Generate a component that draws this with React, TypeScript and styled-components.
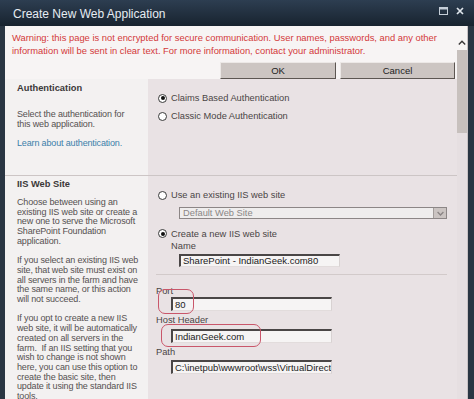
import React from 'react';
import styled, { createGlobalStyle } from 'styled-components';

const GlobalStyle = createGlobalStyle`
  * {
    box-sizing: border-box;
    margin: 0;
    padding: 0;
  }

  html,
  body {
    width: 474px;
    height: 399px;
    overflow: hidden;
    background: #25313e;
    font-family: "Liberation Sans", Arial, sans-serif;
  }
`;

const Window = styled.div`
  width: 474px;
  height: 399px;
  display: flex;
  flex-direction: column;
  overflow: hidden;
  background: #27333f;
`;

const TitleBar = styled.div`
  flex: none;
  height: 26px;
  display: flex;
  align-items: center;
  padding: 0 10px 0 13px;
  background: linear-gradient(#2d3e51, #18232f);
  color: #e6ecf2;
  font-size: 12px;
`;

const Title = styled.span`
  flex: 1;
  padding-top: 1px;
`;

const WindowControls = styled.div`
  display: flex;
  align-items: center;
  gap: 8px;
  margin-top: -4px;
`;

const Body = styled.div`
  flex: 1;
  min-height: 0;
  display: flex;
  padding: 0 6px 0 5px;
  background: #2a3643;
`;

const Main = styled.div`
  flex: 1;
  display: flex;
  flex-direction: column;
  background: #f7f4f4;
  overflow: hidden;
`;

const Warning = styled.p`
  padding: 4.5px 0 0 7px;
  color: #d3393a;
  font-size: 9.4px;
  line-height: 13px;
  white-space: pre-line;
`;

const ButtonRow = styled.div`
  display: flex;
  justify-content: flex-end;
  gap: 4px;
  padding: 5.5px 2px 0 0;
`;

const Button = styled.button<{ $width: number }>`
  width: ${(p) => p.$width}px;
  height: 17px;
  background: #ccc5c2;
  border: 1px solid;
  border-color: #ece8e6 #5c5652 #5c5652 #ece8e6;
  color: #222;
  font-family: inherit;
  font-size: 9.5px;
`;

const Section = styled.div<{ $height?: number; $divided?: boolean }>`
  display: grid;
  grid-template-columns: 143px 1fr;
  flex: ${(p) => (p.$height ? `0 0 ${p.$height}px` : '1')};
  min-height: 0;
  border-top: ${(p) => (p.$divided ? '1px solid #ccc5c5' : 'none')};
`;

const Describe = styled.div<{ $top: number }>`
  background: #f3f1f1;
  padding: ${(p) => p.$top}px 4px 0 12px;
  color: #555050;
  font-size: 9px;
  line-height: 9.7px;
  letter-spacing: -0.15px;
  overflow: hidden;
`;

const Heading = styled.h3<{ $gap: number }>`
  font-size: 9.3px;
  line-height: 12px;
  font-weight: bold;
  letter-spacing: 0;
  color: #3b3838;
  margin-bottom: ${(p) => p.$gap}px;
`;

const Para = styled.p`
  white-space: pre;
  margin-bottom: 9.7px;
`;

const Link = styled.a`
  color: #3b80aa;
  text-decoration: none;
`;

const Controls = styled.div`
  background: #e9e2e4;
  padding: 13px 10px 0 10px;
  color: #4a4545;
  font-size: 9.3px;
`;

const RadioRow = styled.div<{ $top?: number }>`
  display: flex;
  align-items: center;
  gap: 4px;
  height: 12px;
  margin-top: ${(p) => p.$top ?? 0}px;
`;

const RadioDot = styled.span<{ $checked?: boolean }>`
  position: relative;
  width: 9px;
  height: 9px;
  border-radius: 50%;
  border: 1px solid #3a3a3a;
  background: #fff;

  &::after {
    content: '';
    display: ${(p) => (p.$checked ? 'block' : 'none')};
    position: absolute;
    inset: 1.5px;
    border-radius: 50%;
    background: #111;
  }
`;

const Select = styled.div`
  display: flex;
  align-items: center;
  width: 268px;
  height: 12px;
  margin: 6px 0 0 21px;
  padding-left: 3px;
  border: 1px solid #8c8686;
  background: #efeded;
  color: #8a8686;
  font-size: 9.3px;
`;

const SelectButton = styled.span`
  margin-left: auto;
  width: 13px;
  height: 100%;
  display: flex;
  align-items: center;
  justify-content: center;
  background: #cbc4c2;
  border-left: 1px solid #a39d9b;
`;

const SubLabel = styled.div`
  margin: 1px 0 0 13px;
  line-height: 11px;
`;

const TextBox = styled.div<{ $indent: number; $height: number; $top: number }>`
  display: flex;
  align-items: center;
  width: 161px;
  height: ${(p) => p.$height}px;
  margin: ${(p) => p.$top}px 0 0 ${(p) => p.$indent}px;
  padding-left: 2px;
  border-top: 2px solid #4a4646;
  border-left: 2px solid #4a4646;
  border-right: 1px solid #d8d2d2;
  border-bottom: 1px solid #e2dcdc;
  background: #f6f4f4;
  color: #222;
  font-size: 9.5px;
  white-space: nowrap;
  overflow: hidden;
`;

const Rule = styled.hr`
  border: none;
  border-top: 1px solid #d2caca;
  margin: 7px 0 0 -2px;
  width: 291px;
`;

const Fields = styled.div`
  margin-left: -2px;
`;

const Field = styled.div<{ $top: number }>`
  position: relative;
  margin-top: ${(p) => p.$top}px;
`;

const FieldLabel = styled.div`
  line-height: 11px;
`;

const Ring = styled.span<{ $x: number; $y: number; $w: number; $h: number }>`
  position: absolute;
  left: ${(p) => p.$x}px;
  top: ${(p) => p.$y}px;
  width: ${(p) => p.$w}px;
  height: ${(p) => p.$h}px;
  border: 1.5px solid #c9566a;
  border-radius: 7px;
`;

const Scrollbar = styled.div`
  flex: 0 0 11px;
  display: flex;
  flex-direction: column;
  background: #e6dfe1;
  border-right: 1px solid #c9c2c4;
`;

const ScrollTop = styled.div`
  flex: 0 0 24px;
  display: flex;
  align-items: flex-end;
  justify-content: center;
  padding-bottom: 5px;
  background: #f7f4f4;
`;

const Thumb = styled.div`
  flex: 0 0 83px;
  background: #c7c0bd;
`;

const MaximizeIcon = () => (
  <svg width="9" height="8" viewBox="0 0 9 8">
    <rect x="0.5" y="0.5" width="8" height="7" fill="none" stroke="#c5ced8" />
    <rect x="0.5" y="0.5" width="8" height="2" fill="#c5ced8" />
  </svg>
);

const CloseIcon = () => (
  <svg width="8" height="8" viewBox="0 0 8 8">
    <path d="M1 1 L7 7 M7 1 L1 7" stroke="#dfe5eb" strokeWidth="1.7" />
  </svg>
);

const ChevronUp = () => (
  <svg width="8" height="5" viewBox="0 0 8 5">
    <polyline points="0.8,4.4 4,1.2 7.2,4.4" fill="none" stroke="#3a3838" strokeWidth="1.4" />
  </svg>
);

const ChevronDown = () => (
  <svg width="7" height="5" viewBox="0 0 7 5">
    <polyline points="0.6,1 3.5,4 6.4,1" fill="none" stroke="#8a8484" strokeWidth="1.3" />
  </svg>
);

const App: React.FC = () => (
  <>
    <GlobalStyle />
    <Window>
      <TitleBar>
        <Title>Create New Web Application</Title>
        <WindowControls>
          <MaximizeIcon />
          <CloseIcon />
        </WindowControls>
      </TitleBar>
      <Body>
        <Main>
          <Warning>
            {'Warning: this page is not encrypted for secure communication. User names, passwords, and any other\ninformation will be sent in clear text. For more information, contact your administrator.'}
          </Warning>
          <ButtonRow>
            <Button $width={116}>OK</Button>
            <Button $width={115}>Cancel</Button>
          </ButtonRow>

          <Section $height={96}>
            <Describe $top={3}>
              <Heading $gap={16}>Authentication</Heading>
              <Para>{'Select the authentication for\nthis web application.'}</Para>
              <Link>Learn about authentication.</Link>
            </Describe>
            <Controls>
              <RadioRow>
                <RadioDot $checked />
                Claims Based Authentication
              </RadioRow>
              <RadioRow $top={6}>
                <RadioDot />
                Classic Mode Authentication
              </RadioRow>
            </Controls>
          </Section>

          <Section $divided>
            <Describe $top={2}>
              <Heading $gap={8}>IIS Web Site</Heading>
              <Para>
                {'Choose between using an\nexisting IIS web site or create a\nnew one to serve the Microsoft\nSharePoint Foundation\napplication.'}
              </Para>
              <Para>
                {'If you select an existing IIS web\nsite, that web site must exist on\nall servers in the farm and have\nthe same name, or this action\nwill not succeed.'}
              </Para>
              <Para>
                {'If you opt to create a new IIS\nweb site, it will be automatically\ncreated on all servers in the\nfarm.  If an IIS setting that you\nwish to change is not shown\nhere, you can use this option to\ncreate the basic site, then\nupdate it using the standard IIS\ntools.'}
              </Para>
            </Describe>
            <Controls>
              <RadioRow>
                <RadioDot />
                Use an existing IIS web site
              </RadioRow>
              <Select>
                Default Web Site
                <SelectButton>
                  <ChevronDown />
                </SelectButton>
              </Select>
              <RadioRow $top={8.7}>
                <RadioDot $checked />
                Create a new IIS web site
              </RadioRow>
              <SubLabel>Name</SubLabel>
              <TextBox $indent={21} $height={13} $top={2}>
                SharePoint - IndianGeek.com80
              </TextBox>
              <Rule />
              <Fields>
                <Field $top={11}>
                  <FieldLabel>Port</FieldLabel>
                  <TextBox $indent={15} $height={14} $top={0}>
                    80
                  </TextBox>
                  <Ring $x={2.3} $y={3.6} $w={36} $h={24.4} />
                </Field>
                <Field $top={4.5}>
                  <FieldLabel>Host Header</FieldLabel>
                  <TextBox $indent={15} $height={14} $top={2.5}>
                    IndianGeek.com
                  </TextBox>
                  <Ring $x={4.7} $y={8.5} $w={100} $h={23.3} />
                </Field>
                <Field $top={4}>
                  <FieldLabel>Path</FieldLabel>
                  <TextBox $indent={15} $height={14} $top={2.5}>
                    C:\inetpub\wwwroot\wss\VirtualDirectories\80
                  </TextBox>
                </Field>
              </Fields>
            </Controls>
          </Section>
        </Main>
        <Scrollbar>
          <ScrollTop>
            <ChevronUp />
          </ScrollTop>
          <Thumb />
        </Scrollbar>
      </Body>
    </Window>
  </>
);

export default App;
